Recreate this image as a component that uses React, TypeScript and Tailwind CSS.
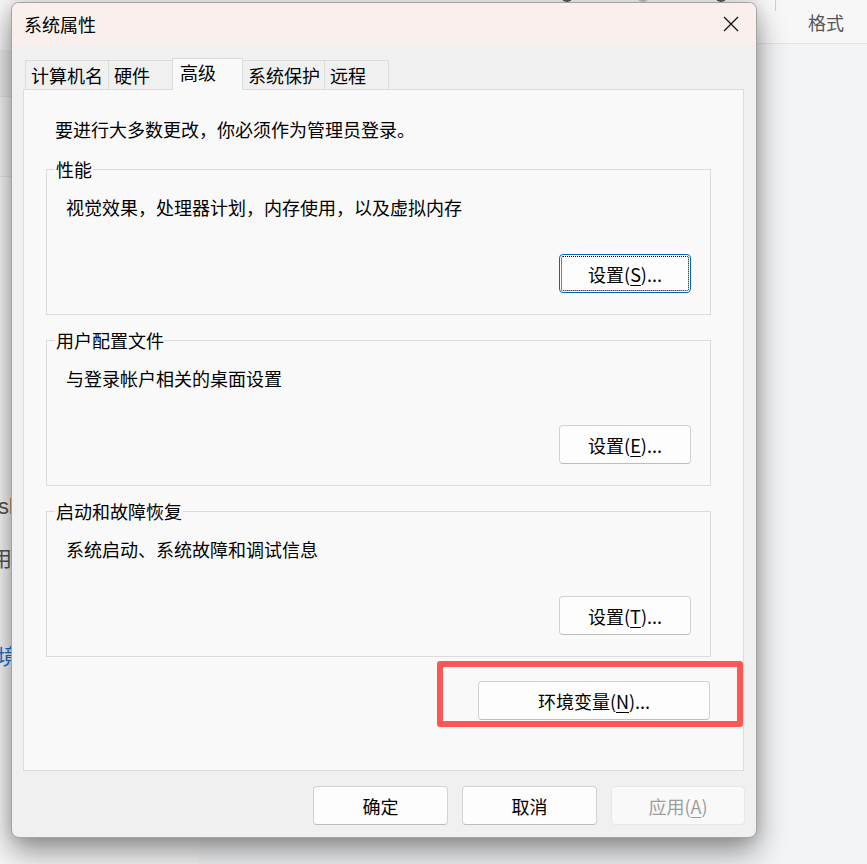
import React from "react";

const F = "font-['Noto_Sans_CJK_SC','Noto_Sans',sans-serif]";

function U({ children }: { children: React.ReactNode }) {
  return <span className="underline decoration-1 underline-offset-[3px]">{children}</span>;
}

function Btn({
  children,
  w,
  focused,
  disabled,
}: {
  children: React.ReactNode;
  w: string;
  focused?: boolean;
  disabled?: boolean;
}) {
  const base = "h-[39px] rounded-[4px] flex items-center justify-center text-[18px] leading-[20px] ";
  let cls = base + w + " ";
  if (focused) {
    cls += "bg-[#fdfdfd] border border-[#0067c0] text-black outline-1 outline-dotted outline-black outline-offset-[-3px]";
  } else if (disabled) {
    cls += "bg-[#f9f9f9] border border-[#e8e8e8] text-[#9d9d9d]";
  } else {
    cls += "bg-[#fdfdfd] border border-[#d2d2d2] border-b-[#bdbdbd] text-black";
  }
  return <div className={cls}>{children}</div>;
}

function Group({
  title,
  desc,
  btn,
  focused,
}: {
  title: string;
  desc: string;
  btn: React.ReactNode;
  focused?: boolean;
}) {
  return (
    <div className="relative ml-[22px] mr-[32px] h-[146px] border border-[#dcdcdc] flex flex-col">
      <span className="absolute left-[8px] top-[-11px] px-[1px] bg-[#f9f9f9] text-[18px] leading-[20px] text-black">
        {title}
      </span>
      <div className="pl-[19px] pt-[27px] text-[18px] leading-[20px] text-black">{desc}</div>
      <div className="flex justify-end pr-[19px] mt-[37px]">
        <Btn w="w-[132px]" focused={focused}>
          {btn}
        </Btn>
      </div>
    </div>
  );
}

function Tab({ label, w, selected }: { label: string; w: string; selected?: boolean }) {
  if (selected) {
    return (
      <div
        className={
          "relative z-10 -mb-px -ml-px h-[32px] bg-[#f9f9f9] border border-b-0 border-[#dcdcdc] pl-[7px] pt-[3px] text-[18px] leading-[20px] text-black " +
          w
        }
      >
        {label}
      </div>
    );
  }
  return (
    <div
      className={
        "-ml-px first:ml-0 h-[29px] bg-[#f0f0f0] border border-b-0 border-[#dcdcdc] pl-[5px] flex items-center text-[18px] leading-[20px] text-black " +
        w
      }
    >
      {label}
    </div>
  );
}

export default function App() {
  return (
    <div className={"relative w-[867px] h-[864px] overflow-hidden bg-[#f3f4f6] " + F}>
      {/* backdrop */}
      <div className="absolute left-0 top-0 w-[199px] h-[864px] flex flex-col bg-[#f7f7f7]">
        <div className="h-[50px] bg-[#f5f5f5]" />
        <div className="h-[47px] bg-[#ebebeb] border-b border-[#e0e0e0]" />
        <div className="h-[80px] bg-[#f3f3f3] border-b border-[#e6e6e6]" />
      </div>
      <div className="absolute left-[-2px] top-[494px] text-[22px] leading-[26px] text-[#555] font-['Liberation_Sans',sans-serif]">
        sl
      </div>
      <div className="absolute left-[-9px] top-[544px] text-[21px] leading-[26px] text-[#555]">用</div>
      <div className="absolute left-[-3px] top-[642px] text-[21px] leading-[26px] text-[#1a6fd1]">境</div>

      <div className="absolute left-[757px] top-0 w-[110px] h-[44px] bg-[#f7f7f8] border-b border-[#e3e3e3]" />
      <div className="absolute left-[775px] top-0 w-px h-[11px] bg-[#cfcfcf]" />
      <div className="absolute left-[808px] top-[10px] text-[18px] leading-[24px] text-[#555]">格式</div>

      <div className="absolute left-[561px] top-[-10px] w-[12px] h-[12px] rounded-full bg-[#555]" />
      <div className="absolute left-[637px] top-[-10px] w-[12px] h-[12px] rounded-full bg-[#bbb]" />
      <div className="absolute left-[715px] top-[-10px] w-[12px] h-[12px] rounded-full bg-[#555]" />

      {/* dialog */}
      <div className="absolute left-[11px] top-[2px] w-[746px] h-[836px] rounded-[8px] border border-[#a4a4a4] bg-[#f0f0f0] overflow-hidden shadow-[0_14px_30px_rgba(0,0,0,0.42),0_0_14px_rgba(0,0,0,0.12)] flex flex-col">
        {/* title bar */}
        <div className="h-[42px] shrink-0 bg-[#f9f0ed] flex items-center justify-between pl-[12px] pr-[16px]">
          <span className="text-[18px] leading-[20px] text-black">系统属性</span>
          <svg width="16" height="16" viewBox="0 0 16 16" className="mr-[1px]">
            <path d="M1 1 L15 15 M15 1 L1 15" stroke="#111" strokeWidth="1.3" fill="none" />
          </svg>
        </div>

        {/* tabs */}
        <div className="mt-[13px] h-[31px] shrink-0 flex items-end pl-[13px]">
          <Tab label="计算机名" w="w-[84px]" />
          <Tab label="硬件" w="w-[65px]" />
          <Tab label="高级" w="w-[71px]" selected />
          <Tab label="系统保护" w="w-[83px]" />
          <Tab label="远程" w="w-[65px]" />
        </div>

        {/* panel */}
        <div className="ml-[11px] mr-[12px] h-[682px] shrink-0 bg-[#f9f9f9] border border-[#dcdcdc] flex flex-col">
          <div className="pl-[31px] pt-[29px] text-[18px] leading-[20px] text-black">
            要进行大多数更改，你必须作为管理员登录。
          </div>
          <div className="mt-[30px] flex flex-col gap-[25px]">
            <Group
              title="性能"
              desc="视觉效果，处理器计划，内存使用，以及虚拟内存"
              focused
              btn={
                <>
                  设置(<U>S</U>)...
                </>
              }
            />
            <Group
              title="用户配置文件"
              desc="与登录帐户相关的桌面设置"
              btn={
                <>
                  设置(<U>E</U>)...
                </>
              }
            />
            <Group
              title="启动和故障恢复"
              desc="系统启动、系统故障和调试信息"
              btn={
                <>
                  设置(<U>T</U>)...
                </>
              }
            />
          </div>
          <div className="mt-[24px] flex justify-end pr-[33px]">
            <Btn w="w-[232px]">
              环境变量(<U>N</U>)...
            </Btn>
          </div>
        </div>

        {/* bottom buttons */}
        <div className="mt-[15px] flex justify-end gap-[14px] pr-[11px]">
          <Btn w="w-[135px]">确定</Btn>
          <Btn w="w-[135px]">取消</Btn>
          <Btn w="w-[134px]" disabled>
            应用(<U>A</U>)
          </Btn>
        </div>
      </div>

      {/* annotation */}
      <div className="absolute left-[437px] top-[661px] w-[306px] h-[66px] border-[6px] border-[#ff5555] rounded-[3px]" />
    </div>
  );
}
